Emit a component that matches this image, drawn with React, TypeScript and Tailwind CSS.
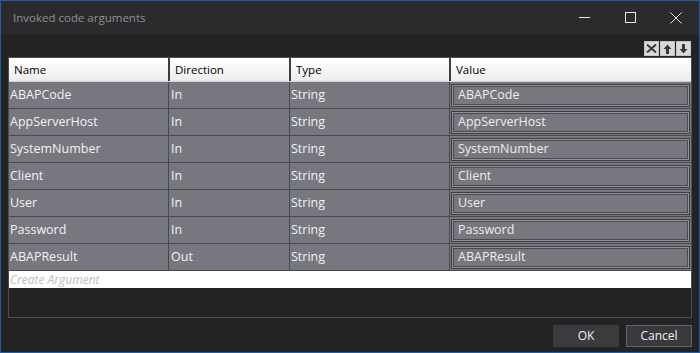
import React from "react"

const args = [
  { name: "ABAPCode", dir: "In" },
  { name: "AppServerHost", dir: "In" },
  { name: "SystemNumber", dir: "In" },
  { name: "Client", dir: "In" },
  { name: "User", dir: "In" },
  { name: "Password", dir: "In" },
  { name: "ABAPResult", dir: "Out" },
]

const ToolButton: React.FC<{ children: React.ReactNode }> = ({ children }) => (
  <div className="w-[15px] h-[15px] bg-[#dadada] border border-[#c4c4c4] flex items-center justify-center">
    {children}
  </div>
)

const App: React.FC = () => {
  return (
    <div
      className="w-[700px] h-[353px] border border-[#1c5fa8] bg-[#232323] flex flex-col text-[12px] overflow-hidden"
      style={{ fontFamily: '"Open Sans", "Noto Sans", sans-serif' }}
    >
      {/* title bar */}
      <div className="h-[33px] bg-[#2b2b2d] flex items-center shrink-0">
        <span className="pl-[12px] text-[#8f8f93] text-[11.5px] flex-1">Invoked code arguments</span>
        <div className="flex items-center h-full">
          <div className="w-[46px] h-full flex items-center justify-center">
            <svg width="11" height="11" viewBox="0 0 11 11">
              <line x1="0" y1="5.5" x2="11" y2="5.5" stroke="#e6e6e6" strokeWidth="1" />
            </svg>
          </div>
          <div className="w-[46px] h-full flex items-center justify-center">
            <svg width="11" height="11" viewBox="0 0 11 11">
              <rect x="0.5" y="0.5" width="10" height="10" fill="none" stroke="#e6e6e6" strokeWidth="1" />
            </svg>
          </div>
          <div className="w-[46px] h-full flex items-center justify-center">
            <svg width="12" height="12" viewBox="0 0 12 12">
              <path d="M0.5 0.5 L11.5 11.5 M11.5 0.5 L0.5 11.5" stroke="#e6e6e6" strokeWidth="1" />
            </svg>
          </div>
        </div>
      </div>

      {/* body */}
      <div className="flex-1 flex flex-col px-[7px]">
        <div className="flex justify-end gap-[1px] pt-[7px] pb-[1px] pr-[1px]">
          <ToolButton>
            <svg width="11" height="9" viewBox="0 0 11 9">
              <path d="M1 0.5 L10 8.5 M10 0.5 L1 8.5" stroke="#3a3a3a" strokeWidth="2" />
            </svg>
          </ToolButton>
          <ToolButton>
            <svg width="9" height="10" viewBox="0 0 9 10">
              <path d="M4.5 0.5 L8.5 5 L6 5 L6 10 L3 10 L3 5 L0.5 5 Z" fill="#3a3a3a" />
            </svg>
          </ToolButton>
          <ToolButton>
            <svg width="9" height="10" viewBox="0 0 9 10">
              <path d="M4.5 9.5 L8.5 5 L6 5 L6 0 L3 0 L3 5 L0.5 5 Z" fill="#3a3a3a" />
            </svg>
          </ToolButton>
        </div>

        {/* grid */}
        <div className="h-[261px] border border-[#4e4e4e] flex flex-col">
          <div className="h-[24px] flex bg-gradient-to-b from-white to-[#ececec] border-b border-[#d2d2d2] text-black text-[11.5px]">
            <div className="w-[161px] pl-[5px] flex items-center border-r-2 border-[#3d3d3d]">Name</div>
            <div className="w-[121px] pl-[5px] flex items-center border-r-2 border-[#3d3d3d]">Direction</div>
            <div className="w-[160px] pl-[5px] flex items-center border-r-2 border-[#3d3d3d]">Type</div>
            <div className="flex-1 pl-[5px] flex items-center">Value</div>
          </div>
          {args.map((a) => (
            <div key={a.name} className="h-[27px] flex bg-[#77777f] border-b border-[#4a4a4c] text-[#f2f2f2] text-[12.5px]">
              <div className="w-[160px] pl-[1px] flex items-center border-r border-[#4a4a4c]">{a.name}</div>
              <div className="w-[121px] pl-[2px] flex items-center border-r border-[#4a4a4c]">{a.dir}</div>
              <div className="w-[160px] pl-[1px] flex items-center border-r border-[#4a4a4c]">String</div>
              <div className="flex-1 flex items-center pl-[1px] pr-[1px]">
                <div className="w-full h-[23px] border border-[#3e3e42] shadow-[inset_0_0_0_1px_#909096,inset_0_0_0_2px_#4a4a50] flex items-center pl-[6px] text-[#ededed]">
                  {a.name}
                </div>
              </div>
            </div>
          ))}
          <div className="h-[17px] bg-white flex items-center pl-[1px] text-[#bdbdbd] italic text-[12px]">Create Argument</div>
        </div>

        {/* footer */}
        <div className="flex justify-end gap-[7px] pt-[7px]">
          <button className="w-[66px] h-[22px] bg-[#3b3b3f] text-[#f0f0f0]">OK</button>
          <button className="w-[66px] h-[22px] bg-[#3a3a3e] border border-[#646468] text-[#f0f0f0]">Cancel</button>
        </div>
      </div>
    </div>
  )
}

export default App
